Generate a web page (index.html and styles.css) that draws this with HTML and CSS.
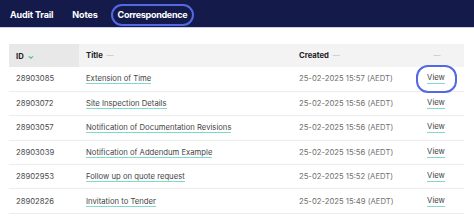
FILE: index.html
```html
<!DOCTYPE html>
<html lang="en">

<head>
    <meta charset="UTF-8">
    <meta name="viewport" content="width=device-width, initial-scale=1.0">
    <title>Correspondence</title>
    <link rel="stylesheet" href="styles.css">
</head>

<body>
    <div class="tabs">
        <a href="javascript:;" class="tab">Audit Trail</a>
        <a href="javascript:;" class="tab">Notes</a>
        <a href="javascript:;" class="tab active">Correspondence</a>
    </div>
    <div class="content">
        <table class="list">
            <thead>
                <tr>
                    <th class="col-id sorted">ID <span class="sort">&#8964;</span></th>
                    <th class="col-title">Title <span class="dash">&mdash;</span></th>
                    <th class="col-created">Created <span class="dash">&mdash;</span></th>
                    <th class="col-action"><span class="dash">&mdash;</span></th>
                </tr>
            </thead>
            <tbody>
                <tr>
                    <td>28903085</td>
                    <td><a href="javascript:;">Extension of Time</a></td>
                    <td class="date">25-02-2025 15:57 (AEDT)</td>
                    <td class="col-action"><a href="javascript:;" class="view focus">View</a></td>
                </tr>
                <tr>
                    <td>28903072</td>
                    <td><a href="javascript:;">Site Inspection Details</a></td>
                    <td class="date">25-02-2025 15:56 (AEDT)</td>
                    <td class="col-action"><a href="javascript:;" class="view">View</a></td>
                </tr>
                <tr>
                    <td>28903057</td>
                    <td><a href="javascript:;">Notification of Documentation Revisions</a></td>
                    <td class="date">25-02-2025 15:56 (AEDT)</td>
                    <td class="col-action"><a href="javascript:;" class="view">View</a></td>
                </tr>
                <tr>
                    <td>28903039</td>
                    <td><a href="javascript:;">Notification of Addendum Example</a></td>
                    <td class="date">25-02-2025 15:56 (AEDT)</td>
                    <td class="col-action"><a href="javascript:;" class="view">View</a></td>
                </tr>
                <tr>
                    <td>28902953</td>
                    <td><a href="javascript:;">Follow up on quote request</a></td>
                    <td class="date">25-02-2025 15:52 (AEDT)</td>
                    <td class="col-action"><a href="javascript:;" class="view">View</a></td>
                </tr>
                <tr>
                    <td>28902826</td>
                    <td><a href="javascript:;">Invitation to Tender</a></td>
                    <td class="date">25-02-2025 15:49 (AEDT)</td>
                    <td class="col-action"><a href="javascript:;" class="view">View</a></td>
                </tr>
            </tbody>
        </table>
    </div>
</body>

</html>
```

FILE: styles.css
```css
* {
    padding: 0;
    margin: 0;
    box-sizing: border-box;
}

body {
    font-family: Inter, "Liberation Sans", sans-serif;
    background-color: #fff;
    color: #333;
}

a {
    text-decoration: none;
}

.tabs {
    display: flex;
    align-items: center;
    height: 28px;
    padding-top: 2px;
    padding-left: 1px;
    background-color: #141b4b;
    border-bottom: 1px solid #c9cff0;
}

.tab {
    display: block;
    height: 22px;
    line-height: 18px;
    padding: 0 7px;
    border: 2px solid transparent;
    border-radius: 11px;
    font-size: 9px;
    font-weight: 700;
    letter-spacing: -0.15px;
    color: #fff;
}

.tab + .tab {
    margin-left: 1px;
}

.tab.active {
    margin-left: 4px;
    padding: 0 5px;
    letter-spacing: -0.3px;
    border-color: #5468e4;
}

.content {
    padding: 16px 10px 0 9px;
}

.list {
    width: 100%;
    border-collapse: collapse;
    font-size: 7.7px;
}

.list th {
    height: 23px;
    padding: 0 7px;
    text-align: left;
    font-weight: 700;
    color: #222;
    background-color: #f3f3f3;
}

.list th.sorted {
    background-color: #e8e8e8;
}

.list td {
    height: 24.4px;
    padding: 0 7px;
    border-bottom: 1px solid #ececec;
    color: #4a4a4a;
}

.col-id {
    width: 70px;
}

.col-created {
    width: 116px;
}

.col-action {
    width: 56px;
    text-align: center !important;
}

.sort {
    color: #2bb58f;
    font-size: 8px;
    margin-left: 2px;
}

.dash {
    color: #bbb;
    font-weight: 400;
    font-size: 7px;
    margin-left: 2px;
}

.list td a {
    color: #444;
    border-bottom: 1px solid #7fdac9;
}

.list td.date {
    color: #707070;
}

.view {
    display: inline-block;
    line-height: 10px;
}

.view.focus {
    position: relative;
}

.view.focus::after {
    content: "";
    position: absolute;
    left: -11px;
    right: -12px;
    top: -8px;
    bottom: -10px;
    border: 2px solid #5468e4;
    border-radius: 12px;
}
```
